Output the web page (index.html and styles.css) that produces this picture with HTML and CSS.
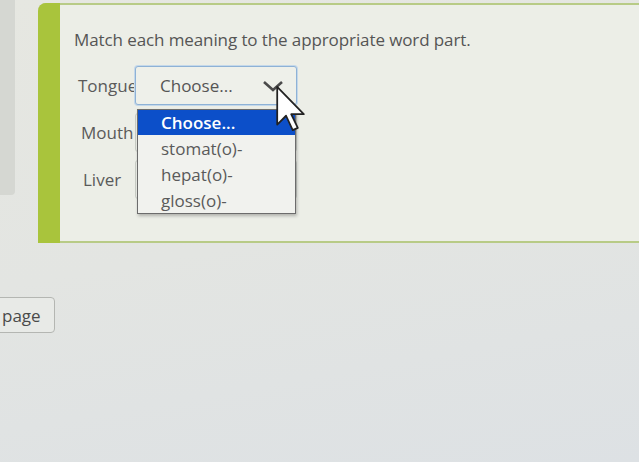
FILE: index.html
```html
<!DOCTYPE html>
<html>
<head>
    <title>Match word parts</title>
    <link rel="stylesheet" href="styles.css">
</head>
<body>
    <div class="side-panel"></div>
    <div class="question">
        <div class="question-bar"></div>
        <div class="question-body">
            <p class="prompt">Match each meaning to the appropriate word part.</p>
            <div class="match-row">
                <span class="match-label">Tongue</span>
                <div class="select-wrap">
                    <div class="select is-open">
                        <span>Choose...</span>
                        <svg class="chevron" width="22" height="12" viewBox="0 0 22 12">
                            <path d="M2 2 L11 10 L20 2" fill="none" stroke="#4a4a4a" stroke-width="2.6"/>
                        </svg>
                    </div>
                    <ul class="dropdown">
                        <li class="active">Choose...</li>
                        <li>stomat(o)-</li>
                        <li>hepat(o)-</li>
                        <li>gloss(o)-</li>
                    </ul>
                    <svg class="cursor" width="31" height="48" viewBox="0 0 14 21">
                        <path d="M1 1 L1 18 L5 14 L8 20.5 L10.3 19.5 L7.3 13.3 L13 13.3 Z" fill="#fff" stroke="#222" stroke-width="0.8" stroke-linejoin="round"/>
                    </svg>
                </div>
            </div>
            <!-- these two selects sit under the open list -->
            <div class="match-row">
                <span class="match-label label-mouth">Mouth</span>
                <div class="select"></div>
            </div>
            <div class="match-row">
                <span class="match-label label-liver">Liver</span>
                <div class="select"></div>
            </div>
        </div>
    </div>
    <button class="page-btn">page</button>
</body>
</html>
```

FILE: styles.css
```css
body {
    margin: 0;
    height: 462px;
    overflow: hidden;
    font-family: "Open Sans", "Noto Sans", sans-serif;
    color: #4f4f4f;
    background: linear-gradient(170deg, #e6e7e1 0%, #e3e5e2 50%, #dde1e4 100%);
    position: relative;
}
.side-panel {
    position: absolute;
    left: 0;
    top: 0;
    width: 15px;
    height: 195px;
    background: #d5d7d2;
    border-bottom-right-radius: 4px;
}
.question {
    display: flex;
    margin: 3px 0 0 38px;
    height: 236px;
    border-top: 2px solid #b8cb86;
    border-bottom: 2px solid #b8cb86;
    border-top-left-radius: 8px;
    background: #eceee7;
}
.question-bar {
    width: 22px;
    flex-shrink: 0;
    margin-top: -2px;
    margin-bottom: -2px;
    background: #a9c43c;
    border-top-left-radius: 8px;
}
.question-body {
    padding: 23px 0 0 14px;
}
.prompt {
    margin: 0 0 15px;
    font-size: 17px;
    letter-spacing: -0.1px;
    color: #555;
}
.match-row {
    display: flex;
    align-items: center;
    height: 39px;
    margin-bottom: 8px;
}
.match-label {
    width: 57px;
    font-size: 17px;
    color: #5a5a5a;
    padding-left: 4px;
}
.label-mouth {
    width: 54px;
    padding-left: 7px;
}
.label-liver {
    width: 52px;
    padding-left: 9px;
}
.select-wrap {
    position: relative;
    z-index: 2;
}
.select {
    box-sizing: border-box;
    width: 162px;
    height: 39px;
    display: flex;
    align-items: center;
    justify-content: space-between;
    padding: 0 12px 0 24px;
    font-size: 17px;
    color: #555;
    border: 1px solid #c9cdc6;
    border-radius: 3px;
    background: #eef0ea;
}
.select.is-open {
    border-color: #8eb2d6;
    box-shadow: 0 0 0 1px #c4d8ea;
}
.dropdown {
    position: absolute;
    left: 2px;
    top: 43px;
    width: 157px;
    margin: 0;
    padding: 0;
    list-style: none;
    background: #f1f2ee;
    border: 1px solid #6c6c6c;
    box-shadow: 1px 2px 3px rgba(0, 0, 0, 0.25);
}
.dropdown li {
    height: 26px;
    line-height: 28px;
    padding-left: 23px;
    font-size: 17px;
    color: #5a5a5a;
}
.dropdown li.active {
    height: 25px;
    line-height: 25px;
    background: #0c4fc9;
    color: #fff;
    font-weight: 600;
}
.cursor {
    position: absolute;
    left: 140px;
    top: 18px;
}
.page-btn {
    display: block;
    margin: 54px 0 0 -12px;
    width: 67px;
    height: 36px;
    padding: 0 0 0 13px;
    text-align: left;
    font-family: "Open Sans", "Noto Sans", sans-serif;
    font-size: 17px;
    color: #4a4a4a;
    background: #e8eae7;
    border: 1px solid #b4b6b2;
    border-radius: 4px;
}
```
